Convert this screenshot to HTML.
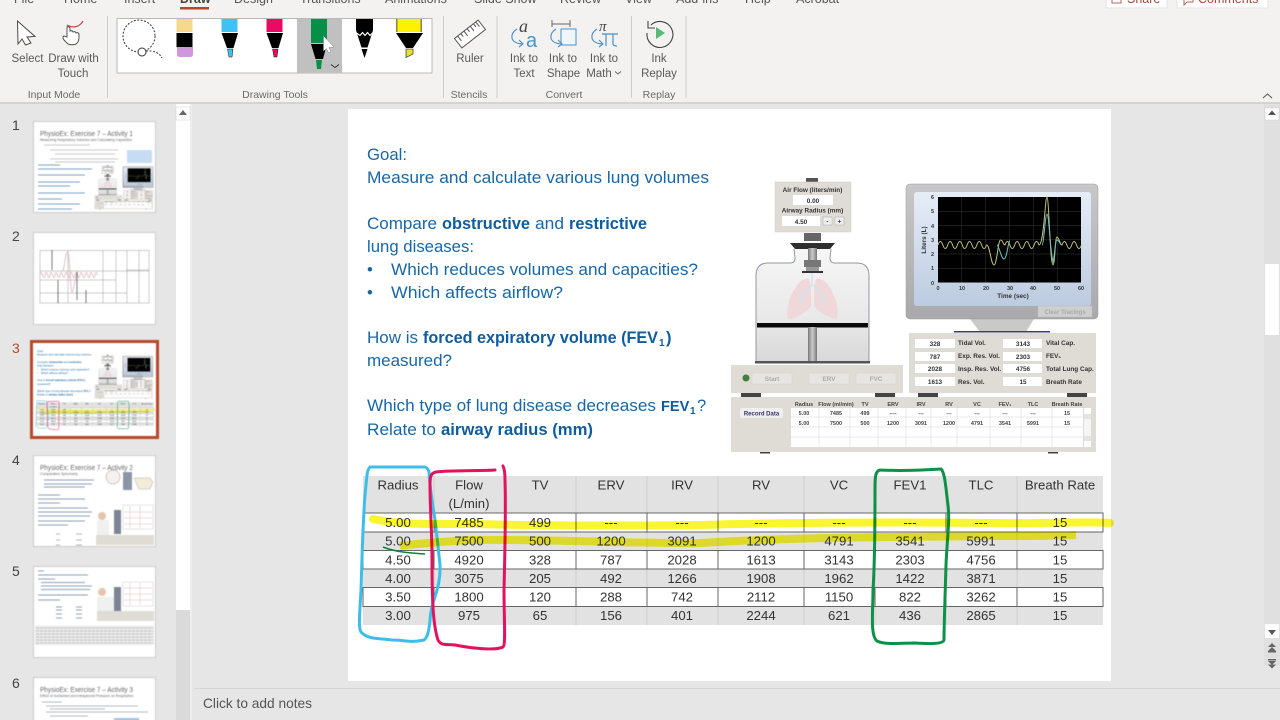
<!DOCTYPE html>
<html><head><meta charset="utf-8"><title>PowerPoint Draw</title>
<style>
html,body{margin:0;padding:0;width:1280px;height:720px;overflow:hidden;background:#e6e6e6}
svg{display:block;filter:blur(.3px)}
text{font-family:"Liberation Sans",sans-serif}
.tab{font-size:12.5px;fill:#555}
.rb{font-size:11.5px;fill:#5a5a5a;text-anchor:middle}
.gl{font-size:10.5px;fill:#6a6a6a;text-anchor:middle}
.s{font-size:16.6px;fill:#1767a8}
.b{font-size:16.6px;fill:#0f5c9f;font-weight:bold}
.t{font-size:13.2px;fill:#333;text-anchor:middle}
.n{font-size:15px;fill:#555}
.sm{font-size:6.4px;fill:#333;font-weight:bold}
.sc{font-size:6.4px;fill:#333;font-weight:bold;text-anchor:middle}
.thumbs{filter:blur(.45px)}
</style></head><body>
<svg xmlns="http://www.w3.org/2000/svg" width="1280" height="720" viewBox="0 0 1280 720">
<defs>
<linearGradient id="mon" x1="0" y1="0" x2="0" y2="1"><stop offset="0" stop-color="#c8c8ca"/><stop offset="1" stop-color="#a9a9ab"/></linearGradient>
<linearGradient id="scr" x1="0" y1="0" x2="0" y2="1"><stop offset="0" stop-color="#e6edf6"/><stop offset="1" stop-color="#bccbe0"/></linearGradient>
<linearGradient id="jar" x1="0" y1="0" x2="0" y2="1"><stop offset="0" stop-color="#f6f6f6"/><stop offset=".6" stop-color="#e9e9e9"/><stop offset="1" stop-color="#d8d8d8"/></linearGradient>
<linearGradient id="rod" x1="0" y1="0" x2="1" y2="0"><stop offset="0" stop-color="#777"/><stop offset=".5" stop-color="#ccc"/><stop offset="1" stop-color="#777"/></linearGradient>

<g id="sim">
  <rect x="806" y="178" width="12" height="4" fill="#555"/>
  <rect x="775" y="182" width="76" height="50" fill="#dfdbd5" stroke="#cfcbc5" stroke-width=".5"/>
  <text class="sc" x="812.5" y="192">Air Flow (liters/min)</text>
  <rect x="793" y="195" width="40" height="10" fill="#fff"/>
  <text class="sc" x="813" y="203">0.00</text>
  <text class="sc" x="812.5" y="212.5">Airway Radius (mm)</text>
  <rect x="782" y="216" width="38" height="10" fill="#fff"/>
  <text class="sc" x="801" y="224">4.50</text>
  <rect x="823" y="217" width="9" height="8" fill="#eee" stroke="#aaa" stroke-width=".5"/>
  <rect x="835" y="217" width="9" height="8" fill="#eee" stroke="#aaa" stroke-width=".5"/>
  <text class="sc" x="827.5" y="223.5">-</text><text class="sc" x="839.5" y="223.5">+</text>
  <rect x="804" y="233" width="17" height="8" fill="#666"/>
  <path d="M790 243H835L830 249H795Z" fill="#2e2e2e"/>
  <path d="M794 249L795 258Q795 263 790 263H768Q756 263 756 276V362H869V276Q869 263 857 263H835Q830 263 830 258L831 249" fill="url(#jar)" stroke="#8f9aa2" stroke-width="1"/>
  <rect x="808" y="248" width="9" height="12" fill="url(#rod)"/>
  <rect x="804" y="260" width="17" height="7" fill="#777"/>
  <rect x="802" y="271" width="21" height="2" fill="#333"/><rect x="806" y="267" width="13" height="4" fill="#999"/>
  <path d="M809 279C803 277 796 284 790 298C787 306 787 314 788 319C795 319 805 314 811 306V286Z" fill="#f0d8da"/>
  <path d="M816 279C822 277 830 284 835 298C838 306 838 314 837 319C830 318 820 314 814 306V286Z" fill="#f0d8da"/>
  <path d="M812 273V285M812 285L803 294L800 305M803 294L798 296M813 285L821 294L824 305M821 294L827 296" stroke="#cfe4f0" stroke-width="1.6" fill="none"/>
  <rect x="757" y="323" width="111" height="4.5" fill="#0a0a0a"/>
  <rect x="808" y="327" width="9" height="35" fill="url(#rod)"/>
  <rect x="755" y="361" width="115" height="2.5" fill="#555"/>
  <rect x="731" y="365" width="172" height="28" fill="#dfdbd5"/>
  <circle cx="746" cy="378" r="3.5" fill="#3f7f3f"/>
  <rect x="752" y="373" width="40" height="11" fill="#e6e5e2" stroke="#d6d4d0" stroke-width=".5"/>
  <rect x="809" y="373" width="40" height="11" fill="#e6e5e2" stroke="#d6d4d0" stroke-width=".5"/>
  <rect x="856" y="373" width="40" height="11" fill="#e6e5e2" stroke="#d6d4d0" stroke-width=".5"/>
  <g text-anchor="middle" font-size="6.4" font-weight="bold"><text x="772" y="381" fill="#aaa">Start</text><text x="829" y="381" fill="#aaa">ERV</text><text x="876" y="381" fill="#aaa">FVC</text></g>
  <rect x="741" y="393" width="20" height="4" fill="#444"/><rect x="875" y="393" width="20" height="4" fill="#444"/><rect x="918" y="393" width="20" height="4" fill="#444"/><rect x="1067" y="393" width="20" height="4" fill="#444"/>
  <path d="M970 319H1034L1026 332H980Z" fill="#c9c9c9"/>
  <rect x="954" y="331" width="96" height="1.5" fill="#3c3c78"/>
  <rect x="906" y="184" width="192" height="135" rx="4" fill="url(#mon)" stroke="#999" stroke-width=".5"/>
  <rect x="914" y="192" width="177" height="114" rx="3" fill="url(#scr)"/>
  <rect x="938" y="197" width="143" height="85.5" fill="#000"/>
  <path d="M938 211.3H1081M938 225.5H1081M938 239.8H1081M938 254H1081M938 268.3H1081M961.8 197V282.5M985.7 197V282.5M1009.5 197V282.5M1033.3 197V282.5M1057.2 197V282.5" stroke="#3a3a3a" stroke-width=".5" fill="none"/>
  <path d="M938 245q2.4-7 4.85 0t4.85 0 4.85 0 4.85 0 4.85 0 4.85 0 4.85 0 4.85 0 4.85 0 4.85 0C990 245 991 265 994 265C997 265 998 240 1000.5 240C1003 240 1003 245 1005 245q2.4-7 4.85 0t4.85 0 4.85 0 4.85 0 4.85 0 4.85 0 4.85 0C1044 245 1045 197 1047 197C1049 197 1050 265 1053 265C1055 265 1055 237 1057 237C1059 237 1060 245 1062 245q2.4-7 4.85 0t4.85 0 4.85 0 4.85 0" stroke="#c5c274" stroke-width="1" fill="none"/>
  <path d="M997 245C999 245 1001 259 1004 259C1007 259 1008 241 1010 241M1042 245C1044 245 1045 214 1047 214C1049 214 1050 250 1053 262C1055 255 1055 240 1057 240C1059 240 1060 245 1062 245" stroke="#6fc0c0" stroke-width="1" fill="none"/>
  <g font-size="5.5" font-weight="bold" text-anchor="end" fill="#333"><text x="934" y="199">6</text><text x="934" y="213">5</text><text x="934" y="228">4</text><text x="934" y="242">3</text><text x="934" y="256">2</text><text x="934" y="270">1</text><text x="934" y="285">0</text></g>
  <g font-size="5.5" font-weight="bold" text-anchor="middle" fill="#333"><text x="938" y="290">0</text><text x="962" y="290">10</text><text x="986" y="290">20</text><text x="1010" y="290">30</text><text x="1033" y="290">40</text><text x="1057" y="290">50</text><text x="1081" y="290">60</text></g>
  <text class="sc" x="1013" y="298">Time (sec)</text>
  <text class="sc" transform="translate(926,240) rotate(-90)">Liters (L)</text>
  <rect x="1038" y="306" width="54" height="11" fill="#cfcfd0" stroke="#bbb" stroke-width=".5"/>
  <text x="1065" y="314" font-size="6" font-weight="bold" text-anchor="middle" fill="#a8a8a8">Clear Tracings</text>
  <rect x="909" y="333" width="187" height="60" fill="#dfdbd5"/>
  <g fill="#fff"><rect x="915" y="339" width="40" height="9"/><rect x="915" y="352" width="40" height="9"/><rect x="915" y="364" width="40" height="9"/><rect x="915" y="377" width="40" height="9"/><rect x="1003" y="339" width="39" height="9"/><rect x="1003" y="352" width="39" height="9"/><rect x="1003" y="364" width="39" height="9"/><rect x="1003" y="377" width="39" height="9"/></g>
  <text class="sc" x="935" y="346">328</text><text class="sc" x="935" y="359">787</text><text class="sc" x="935" y="371">2028</text><text class="sc" x="935" y="384">1613</text>
  <text class="sc" x="1023" y="346">3143</text><text class="sc" x="1023" y="359">2303</text><text class="sc" x="1023" y="371">4756</text><text class="sc" x="1023" y="384">15</text>
  <text class="sm" x="958" y="345">Tidal Vol.</text><text class="sm" x="958" y="358">Exp. Res. Vol.</text><text class="sm" x="958" y="371">Insp. Res. Vol.</text><text class="sm" x="958" y="384">Res. Vol.</text>
  <text class="sm" x="1046" y="345">Vital Cap.</text><text class="sm" x="1046" y="358">FEV₁</text><text class="sm" x="1046" y="371">Total Lung Cap.</text><text class="sm" x="1046" y="384">Breath Rate</text>
  <rect x="731" y="397" width="365" height="55" fill="#dfdbd5"/>
  <rect x="740" y="408" width="43" height="10" rx="2" fill="#f0eff0"/>
  <text x="761.5" y="415.5" font-size="6" font-weight="bold" text-anchor="middle" fill="#336">Record Data</text>
  <rect x="791" y="408" width="292" height="39" fill="#fff"/>
  <path d="M791 417H1083M791 427H1083M791 437H1083M819 408V447M850 408V447M878 408V447M906 408V447M931 408V447M957 408V447M990 408V447M1021 408V447M1052 408V447" stroke="#d4d4d4" stroke-width=".5"/>
  <g font-size="5.5" font-weight="bold" text-anchor="middle" fill="#444">
    <text x="804" y="406">Radius</text><text x="836" y="406">Flow (ml/min)</text><text x="865" y="406">TV</text><text x="893" y="406">ERV</text><text x="921" y="406">IRV</text><text x="949" y="406">RV</text><text x="977" y="406">VC</text><text x="1005" y="406">FEV₁</text><text x="1033" y="406">TLC</text><text x="1067" y="406">Breath Rate</text>
    <text x="804" y="415">5.00</text><text x="836" y="415">7485</text><text x="865" y="415">499</text><text x="893" y="415">----</text><text x="921" y="415">---</text><text x="949" y="415">---</text><text x="977" y="415">---</text><text x="1005" y="415">---</text><text x="1033" y="415">---</text><text x="1067" y="415">15</text>
    <text x="804" y="425">5.00</text><text x="836" y="425">7500</text><text x="865" y="425">500</text><text x="893" y="425">1200</text><text x="921" y="425">3091</text><text x="949" y="425">1200</text><text x="977" y="425">4791</text><text x="1005" y="425">3541</text><text x="1033" y="425">5991</text><text x="1067" y="425">15</text>
  </g>
  <rect x="1084" y="408" width="7" height="39" fill="#e4e4e4"/><rect x="1084" y="408" width="7" height="6" fill="#fff"/><rect x="1084" y="441" width="7" height="6" fill="#fff"/><rect x="1084" y="419" width="7" height="17" fill="#f5f5f5"/>
  <rect x="760" y="452" width="10" height="1.5" fill="#444"/><rect x="1048" y="452" width="10" height="1.5" fill="#444"/>
</g>

<g id="slide3">
  <rect x="348" y="109" width="763" height="572" fill="#fff"/>
  <text class="s" x="367" y="160" textLength="40" lengthAdjust="spacingAndGlyphs">Goal:</text>
  <text class="s" x="367" y="183" textLength="342" lengthAdjust="spacingAndGlyphs">Measure and calculate various lung volumes</text>
  <text class="s" x="367" y="229" textLength="70" lengthAdjust="spacingAndGlyphs">Compare</text>
  <text class="b" x="442" y="229" textLength="88" lengthAdjust="spacingAndGlyphs">obstructive</text>
  <text class="s" x="535" y="229" textLength="29" lengthAdjust="spacingAndGlyphs">and</text>
  <text class="b" x="569" y="229" textLength="78" lengthAdjust="spacingAndGlyphs">restrictive</text>
  <text class="s" x="367" y="252" textLength="107" lengthAdjust="spacingAndGlyphs">lung diseases:</text>
  <text class="s" x="367" y="275">•</text>
  <text class="s" x="391" y="275" textLength="307" lengthAdjust="spacingAndGlyphs">Which reduces volumes and capacities?</text>
  <text class="s" x="367" y="298">•</text>
  <text class="s" x="391" y="298" textLength="172" lengthAdjust="spacingAndGlyphs">Which affects airflow?</text>
  <text class="s" x="367" y="343" textLength="51" lengthAdjust="spacingAndGlyphs">How is</text>
  <text class="b" x="423" y="343" textLength="235" lengthAdjust="spacingAndGlyphs">forced expiratory volume (FEV</text>
  <text class="b" x="659" y="346" style="font-size:10px">1</text>
  <text class="b" x="666" y="343">)</text>
  <text class="s" x="367" y="366" textLength="85" lengthAdjust="spacingAndGlyphs">measured?</text>
  <text class="s" x="367" y="411" textLength="289" lengthAdjust="spacingAndGlyphs">Which type of lung disease decreases</text>
  <text class="b" x="661" y="411" style="font-size:14.6px">FEV</text>
  <text class="b" x="690" y="414" style="font-size:10px">1</text>
  <text class="s" x="697" y="411">?</text>
  <text class="s" x="367" y="435" textLength="69" lengthAdjust="spacingAndGlyphs">Relate to</text>
  <text class="b" x="441" y="435" textLength="152" lengthAdjust="spacingAndGlyphs">airway radius (mm)</text>
  <use href="#sim"/>
  <rect x="363" y="476" width="740" height="37" fill="#e2e2e2"/>
  <rect x="363" y="532" width="740" height="18.5" fill="#e2e2e2"/>
  <rect x="363" y="569" width="740" height="18.5" fill="#e2e2e2"/>
  <rect x="363" y="606.5" width="740" height="18.5" fill="#e2e2e2"/>
  <path d="M434 476V513M505 476V513M576 476V513M647 476V513M718 476V513M804 476V513M875 476V513M946 476V513M1017 476V513M434 532V550M505 532V550M576 532V550M647 532V550M718 532V550M804 532V550M875 532V550M946 532V550M1017 532V550M434 569V587M505 569V587M576 569V587M647 569V587M718 569V587M804 569V587M875 569V587M946 569V587M1017 569V587M434 607V625M505 607V625M576 607V625M647 607V625M718 607V625M804 607V625M875 607V625M946 607V625M1017 607V625" stroke="#cfcfcf" stroke-width="1" fill="none"/>
  <path d="M363 513H1103V532H363ZM363 550.5H1103V569H363ZM363 587.5H1103V606.5H363ZM434 513V532M505 513V532M576 513V532M647 513V532M718 513V532M804 513V532M875 513V532M946 513V532M1017 513V532M434 550V569M505 550V569M576 550V569M647 550V569M718 550V569M804 550V569M875 550V569M946 550V569M1017 550V569M434 588V606M505 588V606M576 588V606M647 588V606M718 588V606M804 588V606M875 588V606M946 588V606M1017 588V606" stroke="#666" stroke-width="1" fill="none"/>
  <text class="t" x="398" y="489.5">Radius</text><text class="t" x="469" y="489.5">Flow</text><text class="t" x="469" y="508">(L/min)</text><text class="t" x="540" y="489.5">TV</text><text class="t" x="611" y="489.5">ERV</text><text class="t" x="682" y="489.5">IRV</text><text class="t" x="761" y="489.5">RV</text><text class="t" x="839" y="489.5">VC</text><text class="t" x="910" y="489.5">FEV1</text><text class="t" x="981" y="489.5">TLC</text><text class="t" x="1060" y="489.5">Breath Rate</text>
  <text class="t" x="398" y="527">5.00</text><text class="t" x="469" y="527">7485</text><text class="t" x="540" y="527">499</text><text class="t" x="611" y="527">---</text><text class="t" x="682" y="527">---</text><text class="t" x="761" y="527">---</text><text class="t" x="839" y="527">---</text><text class="t" x="910" y="527">---</text><text class="t" x="981" y="527">---</text><text class="t" x="1060" y="527">15</text>
  <text class="t" x="398" y="545.5">5.00</text><text class="t" x="469" y="545.5">7500</text><text class="t" x="540" y="545.5">500</text><text class="t" x="611" y="545.5">1200</text><text class="t" x="682" y="545.5">3091</text><text class="t" x="761" y="545.5">1200</text><text class="t" x="839" y="545.5">4791</text><text class="t" x="910" y="545.5">3541</text><text class="t" x="981" y="545.5">5991</text><text class="t" x="1060" y="545.5">15</text>
  <text class="t" x="398" y="564.5">4.50</text><text class="t" x="469" y="564.5">4920</text><text class="t" x="540" y="564.5">328</text><text class="t" x="611" y="564.5">787</text><text class="t" x="682" y="564.5">2028</text><text class="t" x="761" y="564.5">1613</text><text class="t" x="839" y="564.5">3143</text><text class="t" x="910" y="564.5">2303</text><text class="t" x="981" y="564.5">4756</text><text class="t" x="1060" y="564.5">15</text>
  <text class="t" x="398" y="583">4.00</text><text class="t" x="469" y="583">3075</text><text class="t" x="540" y="583">205</text><text class="t" x="611" y="583">492</text><text class="t" x="682" y="583">1266</text><text class="t" x="761" y="583">1908</text><text class="t" x="839" y="583">1962</text><text class="t" x="910" y="583">1422</text><text class="t" x="981" y="583">3871</text><text class="t" x="1060" y="583">15</text>
  <text class="t" x="398" y="601.5">3.50</text><text class="t" x="469" y="601.5">1800</text><text class="t" x="540" y="601.5">120</text><text class="t" x="611" y="601.5">288</text><text class="t" x="682" y="601.5">742</text><text class="t" x="761" y="601.5">2112</text><text class="t" x="839" y="601.5">1150</text><text class="t" x="910" y="601.5">822</text><text class="t" x="981" y="601.5">3262</text><text class="t" x="1060" y="601.5">15</text>
  <text class="t" x="398" y="620">3.00</text><text class="t" x="469" y="620">975</text><text class="t" x="540" y="620">65</text><text class="t" x="611" y="620">156</text><text class="t" x="682" y="620">401</text><text class="t" x="761" y="620">2244</text><text class="t" x="839" y="620">621</text><text class="t" x="910" y="620">436</text><text class="t" x="981" y="620">2865</text><text class="t" x="1060" y="620">15</text>
  <path d="M370 467H425Q428 468 429 472C430 490 432 500 435 520C438 545 439 555 440 565C441 590 431 600 430 620C429 630 428 637 424 640C410 643 405 640 392 640C380 638 368 640 361 632C358 628 360 610 361 590C362 560 363 510 366 485C367 475 367 470 370 467Z" fill="none" stroke="#3dbde9" stroke-width="3" stroke-linecap="round"/>
  <path d="M495 470C480 471 450 470 436 472C431 473 430 476 430 485C430 510 432 530 432 560C432 600 433 625 438 640C441 646 446 644 455 645C470 648 495 651 503 647C506 645 504 620 504 590C505 550 506 510 505 480C505 472 504 468 503 466" fill="none" stroke="#e2125f" stroke-width="3" stroke-linecap="round"/>
  <path d="M880 470C900 471 925 470 941 469C945 472 946 490 948 505C950 520 947 540 946 565C945 600 944 625 944 640C943 644 930 644 915 643C900 643 885 645 877 641C870 636 873 610 873 590C875 560 875 520 875 490C875 478 875 471 880 470" fill="none" stroke="#0e9049" stroke-width="3" stroke-linecap="round"/>
  <path d="M383 547C395 552 410 553 425 554" fill="none" stroke="#0e8040" stroke-width="1.5"/>
  <g style="mix-blend-mode:multiply">
    <path d="M373 519C400 525 430 524 470 524C560 526 620 526 700 525C800 522 900 522 1000 523C1050 524 1090 521 1110 523" fill="none" stroke="#f9f530" stroke-width="8" stroke-linecap="round"/>
    <path d="M400 546C420 543 440 542 470 540C560 539 640 544 700 543C800 537 900 537 1000 536C1030 536 1060 536 1076 535" fill="none" stroke="#f9f530" stroke-width="8" stroke-linecap="butt"/>
  </g>
</g>
</defs>

<rect width="1280" height="720" fill="#e6e6e6"/>
<rect width="1280" height="102" fill="#f3f2f1"/>
<rect y="102" width="1280" height="2" fill="#d4d3d2"/>
<text class="tab" x="14" y="3">File</text><text class="tab" x="64" y="3">Home</text><text class="tab" x="124" y="3">Insert</text><text class="tab" x="180" y="3" font-weight="bold" style="fill:#444">Draw</text><text class="tab" x="234" y="3">Design</text><text class="tab" x="300" y="3">Transitions</text><text class="tab" x="385" y="3">Animations</text><text class="tab" x="474" y="3">Slide Show</text><text class="tab" x="560" y="3">Review</text><text class="tab" x="625" y="3">View</text><text class="tab" x="676" y="3">Add-ins</text><text class="tab" x="745" y="3">Help</text><text class="tab" x="796" y="3">Acrobat</text>
<rect x="180" y="7" width="29" height="2.5" fill="#b7472a"/>
<rect x="1106" y="-2" width="61" height="10" fill="#fff" stroke="#e4e3e2"/>
<rect x="1177" y="-2" width="91" height="10" fill="#fff" stroke="#e4e3e2"/>
<rect x="1112" y="-3" width="9" height="6" fill="none" stroke="#b7675a"/>
<text x="1127" y="3" font-size="12.5" fill="#a4473a">Share</text>
<text x="1198" y="3" font-size="12.5" fill="#a4473a">Comments</text>
<path d="M1184 -3h9v5h-6l-3 3z" fill="none" stroke="#b7675a"/>
<path d="M107.5 16V98M443.5 16V98M497 16V98M631.5 16V98M686 16V98" stroke="#cfcecd" stroke-width="1"/>
<path d="M17.5 21L35 36.5L27 37L31 43L25.5 45L22 39L18 44Z" fill="#fff" stroke="#4a4a4a" stroke-width="1"/>
<text class="rb" x="27.5" y="62">Select</text>
<path d="M67 25C72 28 79 28 83 21" fill="none" stroke="#d23b3b" stroke-width="1.2"/>
<path d="M67 29V37L64 36Q62 37 64 40L68 44Q72 45.5 76 44Q79 42 79 37V34Q78 32 76 33Q75 31 73 32Q72 30 70 31V28Q69 26 67 27Z" fill="#fff" stroke="#555" stroke-width="1"/>
<text class="rb" x="73.5" y="62">Draw with</text><text class="rb" x="73" y="77">Touch</text>
<text class="gl" x="54" y="98">Input Mode</text>
<rect x="117" y="18.5" width="315" height="54.5" fill="#fff" stroke="#b8b8b8"/>
<rect x="297" y="19" width="45" height="54" fill="#c0c0c0"/>
<circle cx="139" cy="36" r="16" fill="none" stroke="#333" stroke-width="1" stroke-dasharray="2 1.5"/>
<circle cx="142" cy="52" r="4" fill="#fff" stroke="#333"/>
<path d="M146 51Q158 50 162 58" fill="none" stroke="#333" stroke-dasharray="2 1.5"/>
<rect x="176.5" y="19" width="16" height="13" fill="#f7d98e"/><rect x="176.5" y="33" width="16" height="14" fill="#000"/><path d="M177 47H193V54Q193 57 190 57H180Q177 57 177 54Z" fill="#cf97dc"/>
<rect x="221.5" y="19" width="16" height="13" fill="#3fc1f3"/><path d="M221.5 33H238L233.5 48H227Z" fill="#000"/><path d="M227.5 49H233L232 57H229Z" fill="#3fc1f3" stroke="#111" stroke-width=".5"/>
<rect x="266.5" y="19" width="16" height="13" fill="#ea0a61"/><path d="M266.5 33H283L278.5 48H272Z" fill="#000"/><path d="M272.5 49H278L277 57H274Z" fill="#ea0a61" stroke="#111" stroke-width=".5"/>
<rect x="311" y="19" width="16" height="24" fill="#05904a"/><path d="M311 44H327L323 59H315.5Z" fill="#000"/><path d="M316 60H322L321 69H317Z" fill="#05904a"/>
<path d="M323.5 36L334 47L329 47.5L331 52L328.5 53L326.5 48.5L323.5 51Z" fill="#fff" stroke="#888" stroke-width=".5"/>
<path d="M331 64.5L335 67.5L339 64.5" fill="none" stroke="#333"/>
<path d="M356 19H373V30L371.5 35L367.5 47.5H361.5L357.500 35L356 30Z" fill="#000"/>
<path d="M356.5 33L360 35.5L362.5 32.5L365 35.500L367.5 32.5L370 35.5L373 32.5" fill="none" stroke="#fff" stroke-width="1.2"/>
<path d="M361.500 49H367.500L364.500 58Z" fill="#000"/>
<rect x="396" y="19" width="26" height="13" fill="#fff200"/><rect x="396" y="19" width="1.5" height="13" fill="#8a8350"/><rect x="420.5" y="19" width="1.5" height="13" fill="#8a8350"/>
<path d="M396 33H423L413 48H406Z" fill="#000"/><path d="M406 49H413V54L406 57.5Z" fill="#e7dc3a" stroke="#111" stroke-width=".6"/>
<text class="gl" x="275" y="98">Drawing Tools</text>
<g transform="translate(470,34) rotate(-38)"><rect x="-15" y="-6" width="30" height="12" fill="#fff" stroke="#555" stroke-width="1"/><path d="M-11 -6V0M-7 -6V-2M-3 -6V0M1 -6V-2M5 -6V0M9 -6V-2M12 -6V0" stroke="#555" stroke-width="1"/></g>
<text class="rb" x="470" y="62">Ruler</text><text class="gl" x="469" y="98">Stencils</text>
<text x="519" y="32" font-size="18" font-style="italic" fill="#444" style="font-family:'Liberation Serif',serif">a</text>
<text x="526" y="47" font-size="20" style="fill:#4a93c9">a</text>
<path d="M517 29Q511 33 512 38Q513 43 522 44M519 40L523 44L519 47" fill="none" stroke="#4a93c9" stroke-width="1.1"/>
<text class="rb" x="524" y="62">Ink to</text><text class="rb" x="524" y="77">Text</text>
<path d="M552 24H570M552 20V27M570 20V27" stroke="#666" fill="none"/>
<rect x="561" y="29" width="15" height="16" fill="#eef5fb" stroke="#4a93c9"/>
<path d="M556 29Q550 33 551 38Q552 43 561 44M558 40L562 44L558 47" fill="none" stroke="#4a93c9" stroke-width="1.1"/>
<text class="rb" x="563" y="62">Ink to</text><text class="rb" x="563.5" y="77">Shape</text>
<text x="599" y="31" font-size="15" font-style="italic" style="font-family:'Liberation Serif',serif;fill:#444">π</text>
<path d="M602 34H618M606 34V46M613 34V44Q613 46 617 46" fill="none" stroke="#4a93c9" stroke-width="1.2"/>
<path d="M597 29Q591 33 592 38Q593 43 602 44M599 40L603 44L599 47" fill="none" stroke="#4a93c9" stroke-width="1.1"/>
<text class="rb" x="604" y="62">Ink to</text><text class="rb" x="599" y="77">Math</text>
<path d="M615 71.5L618 74L621 71.5" fill="none" stroke="#666"/>
<text class="gl" x="564" y="98">Convert</text>
<path d="M651 25A13 13 0 1 1 647 33" fill="none" stroke="#444" stroke-width="1.1"/><path d="M648 21V28H655" fill="none" stroke="#444" stroke-width="1.1"/>
<path d="M656 27L665 33L656 39Z" fill="#5cb87a"/>
<text class="rb" x="659" y="62">Ink</text><text class="rb" x="659" y="77">Replay</text><text class="gl" x="659" y="98">Replay</text>
<path d="M1263 98L1267.5 94L1272 98" fill="none" stroke="#555"/>

<rect x="176" y="104" width="14" height="506" fill="#fff"/>
<rect x="176" y="610" width="14" height="110" fill="#dadada"/>
<rect x="190" y="104" width="2" height="616" fill="#eee"/>
<rect x="176" y="107" width="14" height="13" fill="#fff" stroke="#d0d0d0" stroke-width=".5"/>
<path d="M183 110L187 115H179Z" fill="#666"/>
<rect x="1264" y="104" width="16" height="562" fill="#e0e0e0"/>
<rect x="1265" y="108" width="14" height="12" fill="#fff" stroke="#ccc" stroke-width=".5"/>
<path d="M1272 110.5L1276 115H1268Z" fill="#555"/>
<rect x="1265" y="264" width="14" height="71" fill="#fff"/>
<rect x="1265" y="624" width="14" height="14" fill="#fff"/>
<path d="M1272 635L1268 630H1276Z" fill="#555"/>
<path d="M1272 643L1268 647H1276Z" fill="#666"/><path d="M1272 647L1268 651H1276Z" fill="#666"/><rect x="1268" y="651" width="8" height="1.5" fill="#666"/>
<rect x="1268" y="659" width="8" height="1.5" fill="#666"/><path d="M1272 665L1268 661H1276Z" fill="#666"/><path d="M1272 668.500L1268 664.500H1276Z" fill="#666"/>

<use href="#slide3"/>

<rect x="194" y="688" width="1086" height="32" fill="#e6e6e6"/>
<rect x="194" y="688" width="1086" height="1" fill="#d6d6d6"/>
<text class="n" x="203" y="708" textLength="109" lengthAdjust="spacingAndGlyphs" style="font-size:14px">Click to add notes</text>

<g font-size="14" fill="#444"><text x="12" y="130">1</text><text x="12" y="241">2</text><text x="12" y="353" style="fill:#b7472a">3</text><text x="12" y="465">4</text><text x="12" y="576">5</text><text x="12" y="688">6</text></g>

<g class="thumbs">
<rect x="33.5" y="121.5" width="122" height="91" fill="#fff" stroke="#cccccc"/>
<text x="40" y="136" font-size="7" fill="#666" textLength="93" lengthAdjust="spacingAndGlyphs">PhysioEx: Exercise 7 – Activity 1</text>
<text x="40" y="141" font-size="3.5" fill="#666">Measuring Respiratory Volumes and Calculating Capacities</text>
<path d="M44 145H90M50 150H118M55 154H115M50 159H118M55 162H115" stroke="#b8b8b8" stroke-width=".8"/>
<rect x="127" y="150" width="25" height="13" rx="1" fill="#c5dcf2"/>
<path d="M38 165H60M38 169H92M38 175H85M38 182H80M38 186H70M38 193H85M38 199H62M38 204H80M38 209H72" stroke="#7b9fc4" stroke-width=".9"/>
<g transform="translate(94.6,165) scale(.16) translate(-731,-176)"><use href="#sim"/></g>

<rect x="33.5" y="232.5" width="122" height="92" fill="#fff" stroke="#cccccc"/>
<path d="M40 250.5H149V303H40ZM103 250.5V303M116 250.5V303M127 250.5V303M139 250.5V303M40 271H149M40 280H103M40 293H127M68 250V303M103 280H116M127 270H149" fill="none" stroke="#999" stroke-width=".5"/>
<path d="M40 275q1-5 2.5 0t2.5 0 2.5 0 2.5 0 2.5 0 2.5 0 2.5 0 2.5 0 2.5 0 2.5 0 2.5 0 2.5 0 2.5 0 2.5 0 2.5 0 2.5 0 2.5 0 2.5 0 2.5 0 2.5 0 2.5 0 2.5 0 2.5 0" fill="none" stroke="#d9a9b4" stroke-width=".7"/>
<path d="M62 271C65 271 65 252 67.5 252C70 252 70 290 72 292C74 292 76 270 78 272" fill="none" stroke="#d0a8b0" stroke-width=".7"/>
<path d="M52 250V270M58 280V303M77 272V300M86 290V303" stroke="#222" stroke-width=".6"/>

<rect x="31.5" y="341.5" width="126" height="96" fill="#fff" stroke="#b7472a" stroke-width="3"/>
<g transform="translate(34,344) scale(.1586) translate(-348,-109)"><use href="#slide3"/></g>

<rect x="33.5" y="455.5" width="122" height="91" fill="#fff" stroke="#cccccc"/>
<text x="40" y="470" font-size="7" fill="#666" textLength="93" lengthAdjust="spacingAndGlyphs">PhysioEx: Exercise 7 – Activity 2</text>
<text x="40" y="475" font-size="3.5" fill="#666">Comparative Spirometry</text>
<path d="M44 480H94M44 484H92M44 487H85M38 495H60M38 499H85M38 503H60M38 508H88M38 512H92M38 516H90M38 521H85M38 525H68" stroke="#8a9fb5" stroke-width=".9"/>
<path d="M56 540H60M56 545H60M76 540H82M76 545H82M56 534H60M76 534H82" stroke="#999" stroke-width=".8"/>
<circle cx="113" cy="477" r="7" fill="#f6f0ef" stroke="#999" stroke-width=".5"/>
<rect x="123" y="472" width="9" height="18" fill="#8a96a8"/>
<path d="M134 478H150L153 482L150 489H139Z" fill="#f3ecd8" stroke="#aaa" stroke-width=".5"/>
<circle cx="102" cy="516" r="4" fill="#e6c5ae"/><rect x="97" y="520" width="12" height="15" fill="#f0f0f0"/>
<rect x="114" y="510" width="7" height="24" fill="#7d8594"/>
<rect x="123" y="505" width="30" height="24" fill="#fff" stroke="#ccc" stroke-width=".5"/>
<path d="M124 518H152M124 512H152M124 524H152M130 506V528M140 506V528" stroke="#e2b7bf" stroke-width=".5"/>
<rect x="96" y="535" width="58" height="10" fill="#dfdbd5"/>

<rect x="33.5" y="566.5" width="122" height="91" fill="#fff" stroke="#cccccc"/>
<path d="M38 571H44M38 575H88M38 579H55M41 582.5H85M41 586H92M41 589.5H90M38 595H88M38 600H60M56 607H62M56 610H62M56 614H62M56 618H62M76 607H82M76 610H82M76 614H82M76 618H82" stroke="#8a9fb5" stroke-width=".9"/>
<circle cx="102" cy="592" r="4" fill="#e6c5ae"/><rect x="97" y="597" width="24" height="15" fill="#f0f0f0"/>
<rect x="114" y="587" width="7" height="24" fill="#7d8594"/>
<rect x="123" y="582" width="30" height="24" fill="#fff" stroke="#ccc" stroke-width=".5"/>
<path d="M124 594H152M124 588H152M124 600H152M130 583V605M140 583V605" stroke="#e2b7bf" stroke-width=".5"/>
<rect x="97" y="611" width="57" height="10" fill="#dfdbd5"/>
<rect x="35" y="625.5" width="119" height="19.5" fill="#ececec"/>
<path d="M36 628H153M36 631H153M36 634H153M36 637H153M36 640H153M36 643H153" stroke="#aaa" stroke-width=".7" stroke-dasharray="3 1"/>

<rect x="33.5" y="677.5" width="122" height="60" fill="#fff" stroke="#cccccc"/>
<text x="40" y="692" font-size="7" fill="#666" textLength="93" lengthAdjust="spacingAndGlyphs">PhysioEx: Exercise 7 – Activity 3</text>
<text x="40" y="697" font-size="3.5" fill="#666">Effect of Surfactant and Intrapleural Pressure on Respiration</text>
<path d="M42 702H62M46 706H138M50 709H105M46 712H148M50 716H88" stroke="#9aa2ab" stroke-width=".8"/>
<rect x="114" y="718" width="25" height="3" fill="#a7c3e4"/>
</g>
</svg>
</body></html>
